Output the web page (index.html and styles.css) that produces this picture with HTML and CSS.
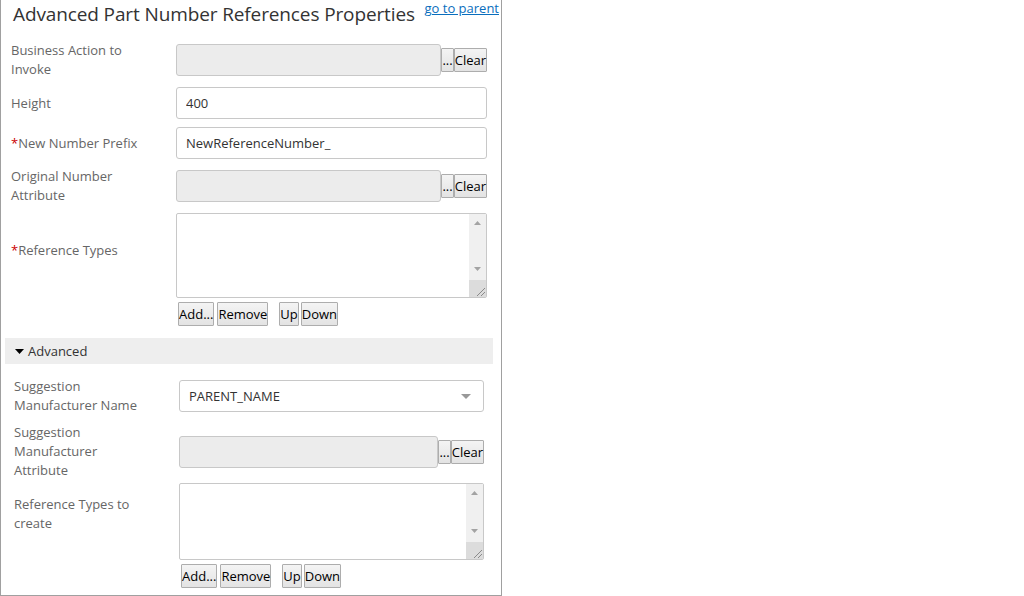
FILE: index.html
```html
<!DOCTYPE html>
<html lang="en">
<head>
<meta charset="utf-8">
<title>Advanced Part Number References Properties</title>
<link rel="stylesheet" href="styles.css">
</head>
<body>
<div class="panel">
  <div class="header">
    <h1 class="title">Advanced Part Number References Properties</h1>
    <a class="parent-link" href="#">go to parent</a>
  </div>

  <div class="form form-main">
    <div class="row">
      <label class="label">Business Action to Invoke</label>
      <div class="field">
        <input class="input" type="text" disabled>
        <button class="btn">...</button><button class="btn">Clear</button>
      </div>
    </div>
    <div class="row">
      <label class="label">Height</label>
      <div class="field"><input class="input" type="text" value="400"></div>
    </div>
    <div class="row">
      <label class="label"><span class="req">*</span>New Number Prefix</label>
      <div class="field"><input class="input" type="text" value="NewReferenceNumber_"></div>
    </div>
    <div class="row">
      <label class="label">Original Number Attribute</label>
      <div class="field">
        <input class="input" type="text" disabled>
        <button class="btn">...</button><button class="btn">Clear</button>
      </div>
    </div>
    <div class="row row-top">
      <label class="label label-pad-lg"><span class="req">*</span>Reference Types</label>
      <div class="field-stack">
        <div class="textarea-box tall">
          <textarea class="textarea"></textarea>
          <div class="scrollbar">
            <div class="sb-btn"><svg width="7" height="4" viewBox="0 0 7 4"><polygon points="0,4 3.5,0 7,4" fill="#a3a3a3"/></svg></div>
            <div class="sb-track"></div>
            <div class="sb-btn sb-down"><svg width="7" height="4" viewBox="0 0 7 4"><polygon points="0,0 7,0 3.5,4" fill="#a3a3a3"/></svg></div>
            <div class="sb-corner"><svg width="12" height="12" viewBox="0 0 12 12"><line x1="11" y1="3" x2="3" y2="11" stroke="#8a8a8a" stroke-width="1"/><line x1="11" y1="7" x2="7" y2="11" stroke="#8a8a8a" stroke-width="1"/></svg></div>
          </div>
        </div>
        <div class="btn-row">
          <button class="btn">Add...</button>
          <button class="btn btn-remove">Remove</button>
          <button class="btn btn-up">Up</button>
          <button class="btn btn-down">Down</button>
        </div>
      </div>
    </div>
  </div>

  <div class="section">
    <div class="section-header">
      <svg width="9" height="5" viewBox="0 0 9 5"><polygon points="0,0 9,0 4.5,5" fill="#000"/></svg>
      <span>Advanced</span>
    </div>
    <div class="section-body form">
      <div class="row">
        <label class="label">Suggestion Manufacturer Name</label>
        <div class="field">
          <div class="select-box">
            <select class="select"><option>PARENT_NAME</option></select>
            <svg width="10" height="5" viewBox="0 0 10 5"><polygon points="0,0 10,0 5,5" fill="#999"/></svg>
          </div>
        </div>
      </div>
      <div class="row">
        <label class="label">Suggestion Manufacturer Attribute</label>
        <div class="field">
          <input class="input" type="text" disabled>
          <button class="btn">...</button><button class="btn">Clear</button>
        </div>
      </div>
      <div class="row row-top row-snug">
        <label class="label label-pad-sm">Reference Types to create</label>
        <div class="field-stack">
          <div class="textarea-box short">
            <textarea class="textarea"></textarea>
            <div class="scrollbar">
              <div class="sb-btn"><svg width="7" height="4" viewBox="0 0 7 4"><polygon points="0,4 3.5,0 7,4" fill="#a3a3a3"/></svg></div>
              <div class="sb-track"></div>
              <div class="sb-btn sb-down"><svg width="7" height="4" viewBox="0 0 7 4"><polygon points="0,0 7,0 3.5,4" fill="#a3a3a3"/></svg></div>
              <div class="sb-corner"><svg width="12" height="12" viewBox="0 0 12 12"><line x1="11" y1="3" x2="3" y2="11" stroke="#8a8a8a" stroke-width="1"/><line x1="11" y1="7" x2="7" y2="11" stroke="#8a8a8a" stroke-width="1"/></svg></div>
            </div>
          </div>
          <div class="btn-row">
            <button class="btn">Add...</button>
            <button class="btn btn-remove">Remove</button>
            <button class="btn btn-up">Up</button>
            <button class="btn btn-down">Down</button>
          </div>
        </div>
      </div>
    </div>
  </div>
</div>
</body>
</html>
```

FILE: styles.css
```css
* {
  box-sizing: border-box;
}

body {
  margin: 0;
  background: #fff;
  font-family: "Open Sans", "Noto Sans", sans-serif;
  font-size: 13px;
  color: #333;
}

.panel {
  width: 502px;
  height: 596px;
  border: 1px solid #a0a0a0;
  border-top: none;
  padding: 0 14px 0 10px;
}

.header {
  display: flex;
  justify-content: space-between;
  align-items: flex-start;
  height: 28px;
  margin-right: -12px;
}

.title {
  margin: 0 0 0 2px;
  font-size: 19px;
  font-weight: 400;
  line-height: 28px;
  letter-spacing: -0.12px;
  color: #333;
  white-space: nowrap;
}

.parent-link {
  font-size: 13px;
  line-height: 15px;
  margin-top: 1px;
  color: #0a6ebd;
  text-decoration: underline;
  white-space: nowrap;
}

.form {
  display: flex;
  flex-direction: column;
  gap: 8px;
}

.form-main {
  margin-top: 13px;
}

.row {
  display: grid;
  grid-template-columns: 165px 1fr;
  align-items: center;
}

.row-top {
  align-items: start;
}

.row-snug {
  margin-top: -5px;
}

.label {
  color: #666;
  line-height: 19px;
  padding-right: 25px;
}

.label-pad-lg {
  padding-top: 28px;
}

.label-pad-sm {
  padding-top: 12px;
}

.req {
  color: #cc0000;
}

.field {
  display: flex;
  align-items: center;
}

.field-stack {
  display: flex;
  flex-direction: column;
}

.input {
  flex: 1;
  min-width: 0;
  height: 32px;
  border: 1px solid #c8c8c8;
  border-radius: 3px;
  padding: 0 9px;
  font-family: inherit;
  font-size: 13px;
  color: #333;
  background: #fff;
}

.input:disabled {
  background: #ececec;
}

.btn {
  height: 24px;
  padding: 0;
  border: 1px solid #adadad;
  border-radius: 1px;
  background: linear-gradient(#f4f4f4, #e3e3e3);
  font-family: inherit;
  font-size: 13px;
  line-height: 22px;
  color: #000;
}

.btn-row {
  display: flex;
  margin-top: 4px;
  padding-left: 2px;
}

.btn-remove {
  margin-left: 3px;
}

.btn-up {
  margin-left: 11px;
}

.btn-down {
  margin-left: 2px;
}

.select-box {
  flex: 1;
  display: flex;
  align-items: center;
  height: 32px;
  border: 1px solid #c8c8c8;
  border-radius: 3px;
  padding-right: 12px;
  background: #fff;
}

.select {
  flex: 1;
  height: 30px;
  border: none;
  outline: none;
  background: transparent;
  -webkit-appearance: none;
  appearance: none;
  padding: 0 9px;
  font-family: inherit;
  font-size: 13px;
  color: #333;
}

.textarea-box {
  display: flex;
  border: 1px solid #c8c8c8;
  border-radius: 2px;
  background: #fff;
}

.textarea-box.tall {
  height: 85px;
}

.textarea-box.short {
  height: 77px;
}

.textarea {
  flex: 1;
  border: none;
  outline: none;
  resize: none;
  font-family: inherit;
  font-size: 13px;
  background: transparent;
}

.scrollbar {
  width: 17px;
  display: flex;
  flex-direction: column;
  background: #f0f0f0;
}

.sb-btn {
  height: 17px;
  display: flex;
  align-items: center;
  justify-content: center;
}

.sb-down {
  padding-bottom: 6px;
}

.sb-track {
  flex: 1;
}

.sb-corner {
  height: 17px;
  display: flex;
  align-items: flex-end;
  justify-content: flex-end;
  background: #dcdcdc;
}

.section {
  margin: 12px -6px 0;
}

.section-header {
  height: 26px;
  display: flex;
  align-items: center;
  gap: 4px;
  padding-left: 10px;
  background: #eeeeee;
  color: #333;
}

.section-body {
  padding: 13px 9px 0 9px;
}
```
